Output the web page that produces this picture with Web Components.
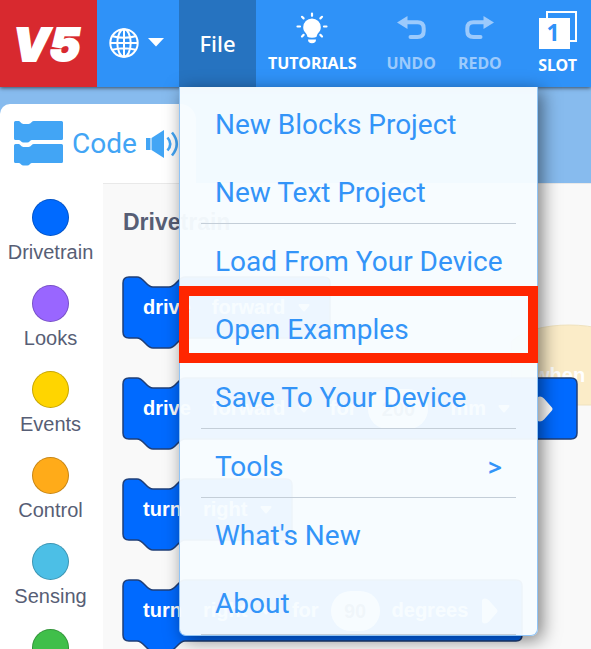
<!DOCTYPE html>
<html lang="en">
<head>
<meta charset="utf-8">
<meta name="viewport" content="width=device-width">
<title>VEXcode V5</title>
<style>
  html, body { margin: 0; height: 100%; }
  body { overflow: hidden; font-family: "Liberation Sans", Arial, sans-serif; background: #87bbee; }
</style>
</head>
<body>
<vex-app></vex-app>
<script>
const define = (name, html, setup) => {
  const template = document.createElement('template');
  template.innerHTML = html;
  customElements.define(name, class extends HTMLElement {
    constructor() {
      super();
      this.attachShadow({ mode: 'open' }).append(template.content.cloneNode(true));
    }
    connectedCallback() {
      if (setup && !this.ready) { this.ready = true; setup(this, this.shadowRoot); }
    }
  });
};

/* Toolbar button: icon over a caption */
define('tool-button', `
  <style>
    :host { display: block; }
    button { display: flex; flex-direction: column; align-items: center; gap: 4px; margin: 0; padding: 0; border: 0;
      background: none; color: #fff; font: 700 16px/22px "Noto Sans", sans-serif; }
    button:disabled { color: #9ccafc; }
    .icon { display: flex; align-items: center; height: 40px; }
  </style>
  <button><span class="icon"><slot name="icon"></slot></span><slot></slot></button>`,
  (el, root) => { root.querySelector('button').disabled = el.hasAttribute('disabled'); });

define('app-toolbar', `
  <style>
    :host { display: flex; height: 87px; background: #2f92f8; box-shadow: 0 1px 4px rgba(0,0,0,.6); position: relative; }
    .logo { flex: 0 0 97px; box-sizing: border-box; padding-right: 4px; display: flex; align-items: center; justify-content: center; background: #d8292f;
      color: #fff; font: italic 900 46px/46px Inter, sans-serif; -webkit-text-stroke: 2px #fff; }
    button { margin: 0; padding: 0; border: 0; background: none; color: #fff; }
    .lang { flex: 0 0 82px; display: flex; align-items: center; justify-content: center; gap: 9px; padding-right: 4px; padding-bottom: 2px; box-sizing: border-box; }
    .file { flex: 0 0 77px; padding-bottom: 2px; background: #2673c0; font: 500 22px/32px "Noto Sans", sans-serif; }
    nav { flex: 1; display: flex; align-items: flex-start; padding: 8px 14px 0 12px; }
    .undo { margin-left: 30px; }
    .redo { margin-left: 22px; }
    .slot { margin-left: auto; margin-top: 2px; }
    svg { display: block; }
  </style>
  <div class="logo">V5</div>
  <button class="lang" aria-label="Language">
    <svg width="30" height="30" viewBox="0 0 30 30" fill="none" stroke="#fff" stroke-width="2">
      <circle cx="15" cy="15" r="13.7"/><ellipse cx="15" cy="15" rx="6.7" ry="13.7"/>
      <path d="M15 1v28M1 15h28M3.5 8.2q11.5 3 23 0M3.5 21.8q11.5-3 23 0"/>
    </svg>
    <svg width="16" height="9" viewBox="0 0 16 9"><path d="M0 0h16L8 8.500z" fill="#fff"/></svg>
  </button>
  <button class="file" aria-haspopup="menu" aria-expanded="true">File</button>
  <nav>
    <tool-button>
      <svg slot="icon" width="32" height="34" viewBox="0 0 32 34" fill="#fff">
        <path d="M16 7.500a8.800 8.800 0 0 1 8.800 8.800c0 3.700-2.300 5.200-3.600 7.400-.5 1-.4 2-1 2.400q-1 .7-4.200.7t-4.200-.7c-.6-.4-.5-1.400-1-2.400-1.300-2.200-3.600-3.700-3.600-7.400A8.800 8.800 0 0 1 16 7.500zM12 28.500h8q0 3.800-4 3.800T12 28.500z"/>
        <path d="M16 2.500v2.300M1.500 15.500h2.500M28 15.500h2.500M6 5.800l1.600 1.600M26 5.800l-1.600 1.600M6 25.500l1.600-1.600M26 25.500l-1.600-1.600" stroke="#fff" stroke-width="2.200" stroke-linecap="round"/>
      </svg>TUTORIALS
    </tool-button>
    <tool-button class="undo" disabled>
      <svg slot="icon" width="32" height="26" viewBox="0 0 32 26">
        <path d="M2 7.500 12.500 1v13z" fill="#9ccafc"/>
        <path d="M12 7.300h10.500q6.200 0 6.200 6v2.700q0 6-6.200 6h-7" fill="none" stroke="#9ccafc" stroke-width="4" stroke-linecap="round"/>
      </svg>UNDO
    </tool-button>
    <tool-button class="redo" disabled>
      <svg slot="icon" width="32" height="26" viewBox="0 0 32 26">
        <path d="M30 7.500 19.500 1v13z" fill="#9ccafc"/>
        <path d="M20 7.300H9.500q-6.200 0-6.200 6v2.700q0 6 6.200 6h7" fill="none" stroke="#9ccafc" stroke-width="4" stroke-linecap="round"/>
      </svg>REDO
    </tool-button>
    <tool-button class="slot">
      <svg slot="icon" width="38" height="38" viewBox="0 0 38 38">
        <path d="M8 7V1h29v29h-6" fill="none" stroke="#fff" stroke-width="2"/>
        <path d="M0 7h31v31H0z" fill="#fff"/>
        <text x="14" y="30" text-anchor="middle" font-family="Noto Sans" font-weight="700" font-size="23" fill="#2f92f8">1</text>
      </svg>SLOT
    </tool-button>
  </nav>`);

define('menu-item', `
  <style>
    :host { display: block; position: relative; }
    :host([separated]) { border-bottom: 1px solid #c4ced8; }
    button { display: flex; justify-content: space-between; width: 100%; height: 68px; margin: 0; padding: 7px 14px 0; border: 0;
      background: none; color: #3394f8; font: 400 28px/62px Roboto, sans-serif; text-align: left; white-space: nowrap; }
    .more { display: none; font: 700 24px/62px "Noto Sans", sans-serif; }
    :host([submenu]) .more { display: block; }
    :host([marked])::after { content: ""; position: absolute; inset: -6px -22px -3px; border: 10px solid #ff2600; pointer-events: none; }
  </style>
  <button role="menuitem"><slot></slot><span class="more">&gt;</span></button>`);

define('file-menu', `
  <style>
    :host { display: block; box-sizing: border-box; padding: 0 21px; background: rgba(247,252,255,.962);
      border: 1px solid #90c4f6; border-top: 0; border-radius: 0 0 7px 7px; box-shadow: 4px 4px 18px rgba(0,0,0,.5); }
  </style>
  <slot></slot>`);

/* One toolbox category */
define('block-category', `
  <style>
    :host { display: block; height: 86px; }
    button { display: flex; flex-direction: column; align-items: center; width: 100%; margin: 0; padding: 0; border: 0; gap: 3px;
      background: none; color: #575e75; font: 400 20px/26px "Liberation Sans", Arial, sans-serif; }
    .dot { box-sizing: border-box; width: 37px; height: 37px; border-radius: 50%; background: var(--dot); border: 1px solid rgba(0,0,0,.22); }
  </style>
  <button><span class="dot"></span><slot></slot></button>`);

/* Puzzle-shaped block whose outline follows its content width */
define('code-block', `
  <style>
    :host { display: grid; width: max-content; color: #fff; font: 700 20px/61px "Liberation Sans", Arial, sans-serif; }
    svg, .row { grid-area: 1 / 1; }
    svg { width: 0; min-width: 100%; height: 73px; overflow: visible; }
    path { fill: #006aff; stroke: #1f3f78; stroke-width: 1.5; }
    .row { display: flex; align-items: center; height: 61px; padding: 0 20px; z-index: 1; }
  </style>
  <svg aria-hidden="true"><path/></svg>
  <div class="row"><slot></slot></div>`,
  (el, root) => {
    const draw = () => {
      const w = Math.round(el.getBoundingClientRect().width);
      root.querySelector('path').setAttribute('d',
        `M0 6Q0 0 6 0H14C21 0 23 10 30 10H46C53 10 55 0 62 0H${w - 6}Q${w} 0 ${w} 6V55Q${w} 61 ${w - 6} 61H62C55 61 53 71 46 71H30C23 71 21 61 14 61H6Q0 61 0 55Z`);
    };
    draw();
    new ResizeObserver(draw).observe(el);
  });

define('block-select', `
  <style>
    :host { display: flex; align-items: center; gap: 12px; padding: 0 20px 0 21px; }
    select { appearance: none; margin: 0; padding: 0; border: 0; background: none; color: #fff; opacity: 1; font: inherit; }
    svg { display: block; }
  </style>
  <select></select>
  <svg width="12" height="8" viewBox="0 0 12 8"><path d="M1.500 1h9L6 6.500z" fill="#fff" stroke="#fff" stroke-width="2" stroke-linejoin="round"/></svg>`,
  (el, root) => {
    const select = root.querySelector('select');
    select.add(new Option(el.getAttribute('value')));
    select.setAttribute('aria-label', el.getAttribute('label'));
  });

define('block-number', `
  <style>
    :host { display: block; padding: 0 12px; }
    input { display: block; box-sizing: border-box; width: var(--w); height: 40px; margin: 0; padding: 0; border: 0; border-radius: 20px;
      background: #fff; color: #575e75; font: 700 20px/40px "Liberation Sans", Arial, sans-serif; text-align: center; }
  </style>
  <input type="text">`,
  (el, root) => {
    const input = root.querySelector('input');
    input.value = el.getAttribute('value');
    input.setAttribute('aria-label', el.getAttribute('label'));
  });

define('block-expand', `
  <style>:host { display: block; padding-right: 4px; } svg { display: block; }</style>
  <svg width="16" height="26" viewBox="0 0 16 26"><path d="M0 3Q0 .5 3 .5 5 .5 7 2.500l7.500 8.500q2 2 0 4L7 23.500Q5 25.500 3 25.500 0 25.500 0 23z" fill="#fff"/></svg>`);

define('code-tab', `
  <style>
    :host { display: flex; align-items: center; box-sizing: border-box; width: 196px; height: 79px; padding: 0 14px; background: #fff;
      border-radius: 10px 16px 0 0; color: #42a5f5; font: 400 28px/40px Roboto, sans-serif; }
    span { margin: 0 9px; }
    button { margin: 0; padding: 0; border: 0; background: none; }
    svg { display: block; }
  </style>
  <svg width="49" height="45" viewBox="0 0 49 45" fill="#42a5f5">
    <path d="M0 1.500Q0 0 1.500 0H4.500q1 0 2 1.200 1.200 1.800 3 1.800h5q1.800 0 3-1.800Q18.500 0 20 0H47.500Q49 0 49 1.500V17.500Q49 19 47.500 19H18q-1.200 0-2.200 1.200-1 1.300-2.600 1.300H9.500q-1.600 0-2.600-1.300Q6 19 4.500 19H1.500Q0 19 0 17.500Z"/>
    <path transform="translate(0 23)" d="M0 1.500Q0 0 1.500 0H4.500q1 0 2 1.200 1.200 1.800 3 1.800h5q1.800 0 3-1.800Q18.500 0 20 0H47.500Q49 0 49 1.500V17.500Q49 19 47.500 19H18q-1.200 0-2.200 1.200-1 1.300-2.600 1.300H9.500q-1.600 0-2.600-1.300Q6 19 4.500 19H1.500Q0 19 0 17.500Z"/>
  </svg>
  <span>Code</span>
  <button aria-label="Read aloud">
    <svg width="34" height="28" viewBox="0 0 34 28" fill="#42a5f5">
      <path d="M0 8h4.500v12H0zM5.500 8 18 0v28L5.500 20z"/>
      <path d="M21.500 7.500q5.500 6.500 0 13M26 2.500q9.500 11.500 0 23" fill="none" stroke="#42a5f5" stroke-width="2.600"/>
    </svg>
  </button>`);

/* Event block lying on the free canvas */
define('hat-block', `
  <style>
    :host { display: grid; width: 220px; color: #fff; font: 700 20px/65px "Liberation Sans", Arial, sans-serif; }
    svg, span { grid-area: 1 / 1; }
    svg { display: block; width: 220px; height: 84px; overflow: visible; }
    span { align-self: end; padding: 0 23px; white-space: nowrap; }
  </style>
  <svg><path d="M0 18C20 -4 95 -6 120 20H214Q220 20 220 26V75Q220 81 214 81H62C55 81 53 91 46 91H30C23 91 21 81 14 81H6Q0 81 0 75Z" fill="#fbecc8" stroke="#efe2bf"/></svg>
  <span><slot></slot></span>`);

define('vex-app', `
  <style>
    :host { display: flex; flex-direction: column; height: 100vh; overflow: hidden; position: relative; }
    app-toolbar { flex: none; z-index: 2; }
    file-menu { position: absolute; z-index: 3; left: 179px; top: 87px; width: 359px; }
    code-tab { margin-top: 17px; }
    main { flex: 1; min-height: 0; display: flex; background: #f9f9f9; }
    .categories { flex: 0 0 103px; box-sizing: border-box; padding: 16px 2px 0 0; background: #fff; overflow: hidden; }
    .flyout { flex: 1; min-width: 0; position: relative; overflow: hidden; padding: 24px 0 0 20px; border-top: 1px solid #e9e9e9; }
    h2 { margin: 0 0 41px; color: #575e75; font: 700 23px/28px "Liberation Sans", Arial, sans-serif; }
    .blocks { display: flex; flex-direction: column; gap: 28px; position: relative; }
    hat-block { position: absolute; left: 408px; top: 140px; }
    .end { padding-right: 0; }
    .unit { padding: 0 27px 0 10px; }
    .last { padding-left: 14px; }
  </style>
  <app-toolbar></app-toolbar>
  <file-menu role="menu">
    <menu-item>New Blocks Project</menu-item>
    <menu-item separated>New Text Project</menu-item>
    <menu-item>Load From Your Device</menu-item>
    <menu-item marked>Open Examples</menu-item>
    <menu-item separated>Save To Your Device</menu-item>
    <menu-item separated submenu>Tools</menu-item>
    <menu-item>What's New</menu-item>
    <menu-item separated>About</menu-item>
  </file-menu>
  <code-tab></code-tab>
  <main>
    <div class="categories">
      <block-category style="--dot:#006aff">Drivetrain</block-category>
      <block-category style="--dot:#9966ff">Looks</block-category>
      <block-category style="--dot:#ffd500">Events</block-category>
      <block-category style="--dot:#ffab19">Control</block-category>
      <block-category style="--dot:#4cbfe6">Sensing</block-category>
      <block-category style="--dot:#40bf4a"></block-category>
    </div>
    <section class="flyout">
      <hat-block>when started</hat-block>
      <h2>Drivetrain</h2>
      <div class="blocks">
        <code-block>drive<block-select class="end" value="forward" label="Direction"></block-select></code-block>
        <code-block>drive<block-select value="forward" label="Direction"></block-select>for<block-number value="200" label="Distance" style="--w:60px"></block-number><block-select class="unit" value="mm" label="Unit"></block-select><block-expand></block-expand></code-block>
        <code-block>turn<block-select class="end" value="right" label="Turn direction"></block-select></code-block>
        <code-block>turn<block-select value="right" label="Turn direction"></block-select>for<block-number value="90" label="Angle" style="--w:49px"></block-number>degrees<block-expand class="last"></block-expand></code-block>
      </div>
    </section>
  </main>`);
</script>
</body>
</html>
